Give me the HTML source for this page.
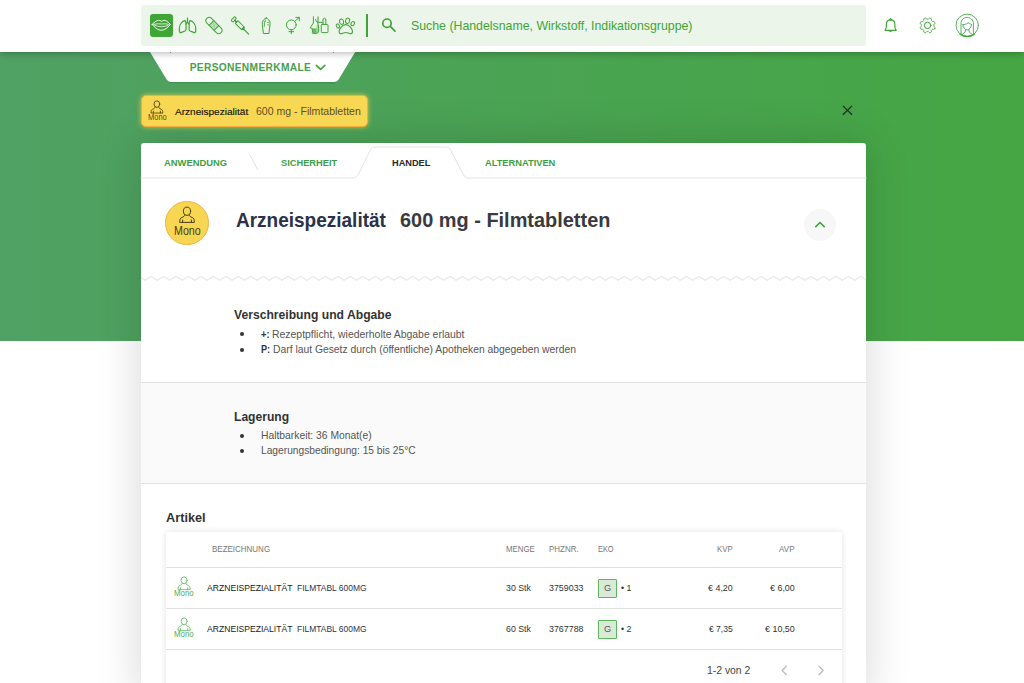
<!DOCTYPE html>
<html lang="de">
<head>
<meta charset="utf-8">
<title>Arzneispezialität 600 mg - Filmtabletten</title>
<style>
*{box-sizing:border-box;margin:0;padding:0}
html,body{width:1024px;height:683px;overflow:hidden;background:#fff;font-family:"Liberation Sans",sans-serif;color:#333}
.abs{position:absolute}
.t{position:absolute;white-space:nowrap;line-height:1;transform-origin:0 50%;z-index:10}
svg{position:absolute;overflow:visible}
#green{left:0;top:52px;width:1024px;height:289px;background:linear-gradient(to right,#50a164,#45a643)}
#hdr{left:0;top:0;width:1024px;height:52px;background:#fff;box-shadow:0 1px 7px rgba(0,0,0,.3);z-index:5}
#search{left:141px;top:5px;width:725px;height:41px;background:#ebf5ea;border-radius:3px}
#lips{left:150px;top:14px;width:23px;height:23px;background:#3fa535;border-radius:3px}
#sep{left:366px;top:14px;width:2px;height:23px;background:#3fa535}
#chip{left:141px;top:95px;width:227px;height:32px;background:#f8d852;border:1px solid #f3ab3c;border-radius:5px;box-shadow:0 0 5px rgba(250,205,70,.8);z-index:3}
#card{left:141px;top:143px;width:725px;height:560px;background:#fff;border-radius:3px 3px 0 0;box-shadow:0 0 45px rgba(0,0,0,.16);z-index:2}
#sec2{left:141px;top:382px;width:725px;height:102px;background:#fafafa;border-top:1px solid #e2e2e2;border-bottom:1px solid #e2e2e2;z-index:3}
#tbl{left:166px;top:531.5px;width:675.5px;height:180px;background:#fff;box-shadow:0 0 6px rgba(0,0,0,.12);border-radius:2px;z-index:3}
.hl{position:absolute;left:166px;width:676px;height:1px;background:#e0e0e0;z-index:4}
.g{position:absolute;width:19.3px;height:19.1px;background:#d9ead6;border:1px solid #5cb85c;border-radius:1px;z-index:4}
.bu{position:absolute;width:4px;height:4px;border-radius:50%;background:#333;z-index:4}
</style>
</head>
<body>
<div id="green" class="abs"></div>
<div id="hdr" class="abs">
  <div id="search" class="abs"></div>
  <div id="lips" class="abs"></div>
  <div id="sep" class="abs"></div>
</div>
<svg style="left:149.5px;top:52px;z-index:4" width="206" height="32" viewBox="0 0 206 32"><path d="M19.5 30.6H185.5" stroke="#2f8a3a" stroke-opacity=".55" stroke-width="1.2" fill="none"/><path d="M0 0H205.2L188.6 27.6Q187.2 30 184.4 30H20.8Q18 30 16.6 27.6Z" fill="#fff"/></svg>
<div class="abs" style="left:170.2px;top:51.6px;width:1.2px;height:.9px;background:rgba(70,70,100,.55);z-index:7"></div>
<div class="abs" style="left:333px;top:51.6px;width:1.2px;height:.9px;background:rgba(70,70,100,.55);z-index:7"></div>
<div id="chip" class="abs"></div>
<div id="card" class="abs"></div>
<div id="sec2" class="abs"></div>
<div id="tbl" class="abs"></div>
<div class="hl" style="top:567px"></div>
<div class="hl" style="top:608px"></div>
<div class="hl" style="top:649px"></div>
<div class="g" style="left:597.6px;top:578.9px"></div>
<div class="g" style="left:597.6px;top:619.9px"></div>
<div class="bu" style="left:240px;top:332.2px"></div>
<div class="bu" style="left:240px;top:347.7px"></div>
<div class="bu" style="left:240px;top:433.5px"></div>
<div class="bu" style="left:240px;top:449.1px"></div>
<div class="abs" style="left:165px;top:201px;width:43.5px;height:43.5px;border-radius:50%;background:#f7d651;border:1px solid #f0b24a;z-index:4"></div>
<div class="abs" style="left:804px;top:209px;width:32px;height:32px;border-radius:50%;background:#f7f7f7;z-index:4"></div>

<svg style="left:0;top:0;z-index:8" width="1024" height="683" viewBox="0 0 1024 683" fill="none" stroke-linecap="round" stroke-linejoin="round">
<defs>
<clipPath id="cc"><rect x="141" y="270" width="725" height="20"/></clipPath>
</defs>
<!-- lips -->
<g stroke="#fff" stroke-width=".95">
<path d="M152.2 24.4C155 21.5 157 20.3 158.6 20.3C159.8 20.3 160.6 21.3 161.3 21.3C162 21.3 162.8 20.3 164 20.3C165.6 20.3 167.6 21.5 170.4 24.4C167.5 28 164.5 30.2 161.3 30.2C158 30.2 155 28 152.2 24.4Z"/>
<path d="M153.4 24.4Q157.5 23.3 161.3 24Q165 23.3 169.2 24.4M154.4 25.2Q161.3 28.4 168.2 25.2" stroke-width=".75"/>
</g>
<g stroke="#3fa535" stroke-width="1">
<!-- lungs -->
<g stroke-width="1.2"><path d="M187.5 18.2V22.6M187.5 22.4L185.9 24M187.5 22.4L189.2 24"/>
<path d="M184.6 20.6C182 21.3 179.5 24.5 179.4 28V31C179.4 32.4 180.4 32.8 181.5 32.4L185 31C185.7 30.7 186 30.2 186 29.4V23.8C186 22 185.6 20.4 184.6 20.6Z"/>
<path d="M190.5 20.6C193.1 21.3 195.6 24.5 195.7 28V31C195.7 32.4 194.7 32.8 193.6 32.4L190.1 31C189.4 30.7 189.1 30.2 189.1 29.4V23.8C189.1 22 189.5 20.4 190.5 20.6Z"/></g>
<!-- bandage -->
<g transform="translate(213.95 25.5) rotate(45)"><rect x="-10" y="-3.3" width="20" height="6.6" rx="3.3"/><rect x="-3.5" y="-3.3" width="7" height="6.6" fill="#3fa535" fill-opacity=".22" stroke="none"/><path d="M-3.5 -3.3V3.3M3.5 -3.3V3.3"/><g fill="#3fa535" stroke="none" fill-opacity=".55"><circle cx="-1.7" cy="-1.3" r=".45"/><circle cx="0" cy="-1.3" r=".45"/><circle cx="1.7" cy="-1.3" r=".45"/><circle cx="-1.7" cy="1.3" r=".45"/><circle cx="0" cy="1.3" r=".45"/><circle cx="1.7" cy="1.3" r=".45"/><circle cx="-.85" cy="0" r=".45"/><circle cx=".85" cy="0" r=".45"/></g></g>
<!-- syringe -->
<g transform="translate(239.7 25.2) rotate(45)"><rect x="-4.4" y="-1.9" width="8.8" height="3.8" rx=".3"/><path d="M4.4 -1.7L6.4 0L4.4 1.7Z" fill="#3fa535"/><path d="M6 0H12.6" stroke-width="1.2"/><path d="M-4.4 0H-7" stroke-width="1.6"/><rect x="-9.7" y="-2.7" width="2.7" height="5.4" rx="1.2"/></g>
<!-- tube -->
<path d="M266.2 17.9C268 18.8 270 20.6 270 22.6V24.4L268.9 33.5H263.4L262.3 24.4V22.6C262.3 20.6 264.4 18.8 266.2 17.9Z"/><path d="M264.4 21.2V26.4M265.6 20V21.2M267.6 22.4H268.8M267.6 24.8H268.8" stroke-width=".8"/>
<!-- gender -->
<circle cx="291.3" cy="24.9" r="4.9"/><path d="M294.8 21.4L299.2 17.4M295.8 17.4H299.3V20.7M291.3 29.8V33.7M288.9 31.7H293.7"/>
<!-- hand + polish -->
<path d="M313.4 16.8V23L310.2 27.8L312.4 28.5V32.6Q312.4 33.6 313.6 33.6H316.2Q318.7 33.2 318.7 30V28L317.7 22.4M318 16.8V22.2M315.5 19.5Q316 22.2 318 22.3H322.8"/>
<rect x="312.6" y="28.4" width="3.9" height="5" fill="#3fa535" fill-opacity=".75" stroke="none"/><rect x="316.5" y="25" width="2" height="8" fill="#3fa535" fill-opacity=".4" stroke="none"/>
<rect x="321.3" y="24.4" width="6.7" height="8.2" rx=".8"/><path d="M323 24.4V20Q323 18.2 324.4 18.2Q325.8 18.2 325.8 20V24.4"/>
<!-- paw -->
<path d="M345.8 24.6C342.4 24.6 339.1 29.3 339.1 31.6C339.1 33.5 340.6 33.9 342.1 33.5C343.6 33.1 344.5 32.5 345.8 32.5C347.1 32.5 348 33.1 349.5 33.5C351 33.9 352.5 33.5 352.5 31.6C352.5 29.3 349.2 24.6 345.8 24.6Z" stroke-width="1.15"/>
<ellipse cx="337.9" cy="25.9" rx="1.5" ry="2.1" transform="rotate(-30 337.9 25.9)"/><ellipse cx="341.6" cy="21.7" rx="2" ry="2.7" transform="rotate(-12 341.6 21.7)"/><ellipse cx="347.6" cy="20.8" rx="2" ry="2.7" transform="rotate(8 347.6 20.8)"/><ellipse cx="352.7" cy="23.6" rx="1.6" ry="2.2" transform="rotate(30 352.7 23.6)"/>
</g>
<!-- magnifier -->
<g stroke="#3fa535" stroke-width="1.7"><circle cx="387" cy="23.2" r="4.2"/><path d="M390.3 26.4L395 31.1"/></g>
<!-- bell -->
<g stroke="#3fa535" stroke-width="1.15"><path d="M885 30.4H896.2L894.9 27.6V24.5C894.9 21.6 893 19.9 890.6 19.9C888.2 19.9 886.3 21.6 886.3 24.5V27.6Z"/><path d="M889.5 30.6Q890.6 32.8 891.7 30.6"/><path d="M890.6 18.4L889.9 19.8H891.3Z" fill="#3fa535"/></g>
<!-- gear -->
<g stroke="#3fa535" stroke-width="1"><path d="M934.71 28.35 L934.59 28.62 L934.46 28.90 L934.28 29.14 L933.84 29.23 L933.38 29.26 L932.92 29.27 L932.50 29.27 L932.31 29.43 L932.15 29.61 L931.98 29.78 L931.81 29.95 L931.63 30.11 L931.47 30.30 L931.47 30.72 L931.46 31.18 L931.43 31.64 L931.34 32.08 L931.10 32.26 L930.82 32.39 L930.55 32.51 L930.27 32.62 L929.98 32.72 L929.68 32.77 L929.31 32.52 L928.96 32.22 L928.63 31.90 L928.33 31.60 L928.09 31.58 L927.84 31.60 L927.60 31.60 L927.36 31.60 L927.11 31.58 L926.87 31.60 L926.57 31.90 L926.24 32.22 L925.89 32.52 L925.52 32.77 L925.22 32.72 L924.93 32.62 L924.65 32.51 L924.38 32.39 L924.10 32.26 L923.86 32.08 L923.77 31.64 L923.74 31.18 L923.73 30.72 L923.73 30.30 L923.57 30.11 L923.39 29.95 L923.22 29.78 L923.05 29.61 L922.89 29.43 L922.70 29.27 L922.28 29.27 L921.82 29.26 L921.36 29.23 L920.92 29.14 L920.74 28.90 L920.61 28.62 L920.49 28.35 L920.38 28.07 L920.28 27.78 L920.23 27.48 L920.48 27.11 L920.78 26.76 L921.10 26.43 L921.40 26.13 L921.42 25.89 L921.40 25.64 L921.40 25.40 L921.40 25.16 L921.42 24.91 L921.40 24.67 L921.10 24.37 L920.78 24.04 L920.48 23.69 L920.23 23.32 L920.28 23.02 L920.38 22.73 L920.49 22.45 L920.61 22.18 L920.74 21.90 L920.92 21.66 L921.36 21.57 L921.82 21.54 L922.28 21.53 L922.70 21.53 L922.89 21.37 L923.05 21.19 L923.22 21.02 L923.39 20.85 L923.57 20.69 L923.73 20.50 L923.73 20.08 L923.74 19.62 L923.77 19.16 L923.86 18.72 L924.10 18.54 L924.38 18.41 L924.65 18.29 L924.93 18.18 L925.22 18.08 L925.52 18.03 L925.89 18.28 L926.24 18.58 L926.57 18.90 L926.87 19.20 L927.11 19.22 L927.36 19.20 L927.60 19.20 L927.84 19.20 L928.09 19.22 L928.33 19.20 L928.63 18.90 L928.96 18.58 L929.31 18.28 L929.68 18.03 L929.98 18.08 L930.27 18.18 L930.55 18.29 L930.82 18.41 L931.10 18.54 L931.34 18.72 L931.43 19.16 L931.46 19.62 L931.47 20.08 L931.47 20.50 L931.63 20.69 L931.81 20.85 L931.98 21.02 L932.15 21.19 L932.31 21.37 L932.50 21.53 L932.92 21.53 L933.38 21.54 L933.84 21.57 L934.28 21.66 L934.46 21.90 L934.59 22.18 L934.71 22.45 L934.82 22.73 L934.92 23.02 L934.97 23.32 L934.72 23.69 L934.42 24.04 L934.10 24.37 L933.80 24.67 L933.78 24.91 L933.80 25.16 L933.80 25.40 L933.80 25.64 L933.78 25.89 L933.80 26.13 L934.10 26.43 L934.42 26.76 L934.72 27.11 L934.97 27.48 L934.92 27.78 L934.82 28.07 L934.71 28.35Z"/><circle cx="927.6" cy="25.4" r="3.2"/></g>
<!-- avatar -->
<g stroke="#58b25c" stroke-width="1"><circle cx="967.2" cy="25.3" r="11.2"/>
<path d="M961 33.3V24C961 19.6 963.6 17.5 967.2 17.5C970.8 17.5 973.4 19.6 973.4 24V33.3"/>
<path d="M962.8 24.6C962.8 27 965 29.9 967.2 30C969.4 29.9 971.6 27 971.6 24.6M962.8 24.7Q965 24.6 966.6 23.8Q968 22.5 969.4 23Q970.4 24.5 971.6 24.7M965.7 29.5L965 32.3L962.4 34.2M968.7 29.5L969.4 32.3L972 34.2"/>
<path d="M960.2 34.1A11.2 11.2 0 0 0 974.2 34.1" stroke="#3fa535" stroke-width="1.5"/></g>
<!-- PM chevron -->
<path d="M316.3 65.3L320.6 69.3L324.9 65.3" stroke="#3fa535" stroke-width="1.6"/>
<!-- close X -->
<path d="M842.9 105.9L852 114.7M852 105.9L842.9 114.7" stroke="#2a2a2a" stroke-width="1.3" stroke-linecap="butt"/>
<!-- tabs line -->
<path d="M141 178H352C355.5 178 357 176.8 358.5 174.2L370 150.5C371.5 147.6 373 147 376 147H445C448 147 449.5 147.6 451 150.5L463 174.2C464.5 176.8 466 178 469.5 178H866" stroke="#e4e4e4" stroke-width="1"/>
<path d="M249.3 153.8L257.6 169.5" stroke="#e4e4e4" stroke-width="1"/>
<!-- zigzag -->
<path d="M132.43 280.10 L138.65 276.50 L144.88 280.10 L151.10 276.50 L157.32 280.10 L163.55 276.50 L169.77 280.10 L176.00 276.50 L182.22 280.10 L188.45 276.50 L194.67 280.10 L200.90 276.50 L207.12 280.10 L213.35 276.50 L219.57 280.10 L225.80 276.50 L232.02 280.10 L238.25 276.50 L244.47 280.10 L250.70 276.50 L256.92 280.10 L263.15 276.50 L269.37 280.10 L275.60 276.50 L281.82 280.10 L288.05 276.50 L294.28 280.10 L300.50 276.50 L306.73 280.10 L312.95 276.50 L319.18 280.10 L325.40 276.50 L331.63 280.10 L337.85 276.50 L344.08 280.10 L350.30 276.50 L356.53 280.10 L362.75 276.50 L368.98 280.10 L375.20 276.50 L381.43 280.10 L387.65 276.50 L393.88 280.10 L400.10 276.50 L406.33 280.10 L412.55 276.50 L418.78 280.10 L425.00 276.50 L431.23 280.10 L437.45 276.50 L443.68 280.10 L449.90 276.50 L456.13 280.10 L462.35 276.50 L468.58 280.10 L474.80 276.50 L481.03 280.10 L487.25 276.50 L493.48 280.10 L499.70 276.50 L505.93 280.10 L512.15 276.50 L518.38 280.10 L524.60 276.50 L530.83 280.10 L537.05 276.50 L543.28 280.10 L549.50 276.50 L555.73 280.10 L561.95 276.50 L568.18 280.10 L574.40 276.50 L580.63 280.10 L586.85 276.50 L593.08 280.10 L599.30 276.50 L605.53 280.10 L611.75 276.50 L617.98 280.10 L624.20 276.50 L630.43 280.10 L636.65 276.50 L642.88 280.10 L649.10 276.50 L655.33 280.10 L661.55 276.50 L667.78 280.10 L674.00 276.50 L680.23 280.10 L686.45 276.50 L692.68 280.10 L698.90 276.50 L705.13 280.10 L711.35 276.50 L717.58 280.10 L723.80 276.50 L730.03 280.10 L736.25 276.50 L742.48 280.10 L748.70 276.50 L754.93 280.10 L761.15 276.50 L767.38 280.10 L773.60 276.50 L779.83 280.10 L786.05 276.50 L792.28 280.10 L798.50 276.50 L804.73 280.10 L810.95 276.50 L817.18 280.10 L823.40 276.50 L829.63 280.10 L835.85 276.50 L842.08 280.10 L848.30 276.50 L854.53 280.10 L860.75 276.50 L866.98 280.10" stroke="#ebebeb" stroke-width="1.4" stroke-linejoin="miter" clip-path="url(#cc)"/>
<!-- title person -->
<g stroke="#4a3f1c" stroke-width="1"><ellipse cx="187" cy="211.2" rx="3.6" ry="4.1"/><path d="M184.9 214.7C184.7 216.3 183.5 216.9 181.8 217.5C180 218.2 179.7 219.3 179.7 222.4H194.3C194.3 219.3 194 218.2 192.2 217.5C190.5 216.9 189.3 216.3 189.1 214.7M182.6 220V222.4M191.4 220V222.4"/></g>
<!-- chip person -->
<g stroke="#5a4a1c" stroke-width="1.15" transform="translate(156.9 104.1) scale(.8) translate(-187 -211.2)"><ellipse cx="187" cy="211.2" rx="3.6" ry="4.1"/><path d="M184.9 214.7C184.7 216.3 183.5 216.9 181.8 217.5C180 218.2 179.7 219.3 179.7 222.4H194.3C194.3 219.3 194 218.2 192.2 217.5C190.5 216.9 189.3 216.3 189.1 214.7M182.6 220V222.4M191.4 220V222.4"/></g>
<!-- row persons -->
<g stroke="#74c078" stroke-width="1.15" transform="translate(184.1 580.3) scale(.835) translate(-187 -211.2)"><ellipse cx="187" cy="211.2" rx="3.6" ry="4.1"/><path d="M184.9 214.7C184.7 216.3 183.5 216.9 181.8 217.5C180 218.2 179.7 219.3 179.7 222.4H194.3C194.3 219.3 194 218.2 192.2 217.5C190.5 216.9 189.3 216.3 189.1 214.7M182.6 220V222.4M191.4 220V222.4"/></g>
<g stroke="#74c078" stroke-width="1.15" transform="translate(184.1 621.3) scale(.835) translate(-187 -211.2)"><ellipse cx="187" cy="211.2" rx="3.6" ry="4.1"/><path d="M184.9 214.7C184.7 216.3 183.5 216.9 181.8 217.5C180 218.2 179.7 219.3 179.7 222.4H194.3C194.3 219.3 194 218.2 192.2 217.5C190.5 216.9 189.3 216.3 189.1 214.7M182.6 220V222.4M191.4 220V222.4"/></g>
<!-- up chevron -->
<path d="M815.8 226.6L820 222.5L824.2 226.6" stroke="#3fa535" stroke-width="1.6"/>
<!-- pager -->
<path d="M786.4 666.2L782.2 670.5L786.4 674.8M819 666.2L823.2 670.5L819 674.8" stroke="#bdbdbd" stroke-width="1.3"/>
</svg>

<div class="t" style="left:411.00px;top:20px;font-size:12.4px;color:#3fa535;transform:scaleX(0.9952);">Suche (Handelsname, Wirkstoff, Indikationsgruppe)</div>
<div class="t" style="left:189.70px;top:63px;font-size:10.2px;color:#4aa04e;font-weight:bold;letter-spacing:0.337px;">PERSONENMERKMALE</div>
<div class="t" style="left:175.20px;top:107px;font-size:9.9px;color:#15130c;transform:scaleX(1.0180);"><span style="-webkit-text-stroke:.15px #15130c">Arzneispezialität</span></div>
<div class="t" style="left:255.60px;top:107px;font-size:10.4px;color:#5e5025;transform:scaleX(1.0138);">600 mg - Filmtabletten</div>
<div class="t" style="left:163.80px;top:158px;font-size:9.9px;color:#3f9e45;font-weight:bold;transform:scaleX(0.9489);">ANWENDUNG</div>
<div class="t" style="left:281.00px;top:158px;font-size:9.9px;color:#3f9e45;font-weight:bold;transform:scaleX(0.9396);">SICHERHEIT</div>
<div class="t" style="left:391.90px;top:158px;font-size:9.9px;color:#2a2a2a;font-weight:bold;transform:scaleX(0.9330);">HANDEL</div>
<div class="t" style="left:485.30px;top:158px;font-size:9.9px;color:#3f9e45;font-weight:bold;transform:scaleX(0.9399);">ALTERNATIVEN</div>
<div class="t" style="left:174.30px;top:225px;font-size:12.2px;color:#4a3f1c;transform:scaleX(0.8754);">Mono</div>
<div class="t" style="left:236.40px;top:210px;font-size:20.8px;color:#2b3147;font-weight:bold;transform:scaleX(0.9133);">Arzneispezialität</div>
<div class="t" style="left:399.60px;top:210px;font-size:20.8px;color:#3a3a3e;font-weight:bold;transform:scaleX(0.9582);">600 mg - Filmtabletten</div>
<div class="t" style="left:233.90px;top:308px;font-size:13.6px;color:#333;font-weight:bold;transform:scaleX(0.8936);">Verschreibung und Abgabe</div>
<div class="t" style="left:260.70px;top:330px;font-size:10.1px;color:#333;font-weight:bold;transform:scaleX(0.9174);">+:</div>
<div class="t" style="left:272.00px;top:330px;font-size:10.1px;color:#555;transform:scaleX(1.0333);">Rezeptpflicht, wiederholte Abgabe erlaubt</div>
<div class="t" style="left:260.70px;top:345px;font-size:10.1px;color:#333;font-weight:bold;transform:scaleX(0.9015);">P:</div>
<div class="t" style="left:272.80px;top:345px;font-size:10.1px;color:#555;transform:scaleX(1.0233);">Darf laut Gesetz durch (öffentliche) Apotheken abgegeben werden</div>
<div class="t" style="left:233.90px;top:410px;font-size:13.6px;color:#333;font-weight:bold;transform:scaleX(0.8896);">Lagerung</div>
<div class="t" style="left:260.80px;top:431px;font-size:10.1px;color:#555;transform:scaleX(1.0223);">Haltbarkeit: 36 Monat(e)</div>
<div class="t" style="left:260.80px;top:446px;font-size:10.1px;color:#555;transform:scaleX(1.0120);">Lagerungsbedingung: 15 bis 25°C</div>
<div class="t" style="left:165.80px;top:511px;font-size:13.6px;color:#333;font-weight:bold;transform:scaleX(0.9359);">Artikel</div>
<div class="t" style="left:212.10px;top:545px;font-size:9.3px;color:#777;transform:scaleX(0.8586);">BEZEICHNUNG</div>
<div class="t" style="left:505.80px;top:545px;font-size:9.3px;color:#777;transform:scaleX(0.8418);">MENGE</div>
<div class="t" style="left:549.40px;top:545px;font-size:9.3px;color:#777;transform:scaleX(0.8553);">PHZNR.</div>
<div class="t" style="left:598.20px;top:545px;font-size:9.3px;color:#777;transform:scaleX(0.7943);">EKO</div>
<div class="t" style="left:717.40px;top:545px;font-size:9.3px;color:#777;transform:scaleX(0.8437);">KVP</div>
<div class="t" style="left:779.30px;top:545px;font-size:9.3px;color:#777;transform:scaleX(0.8649);">AVP</div>
<div class="t" style="left:207.00px;top:584px;font-size:8.6px;color:#222;">ARZNEISPEZIALITÄT</div>
<div class="t" style="left:297.20px;top:583px;font-size:9.8px;color:#2b3550;transform:scaleX(0.8625);">FILMTABL 600MG</div>
<div class="t" style="left:505.80px;top:583px;font-size:9.6px;color:#333;transform:scaleX(0.9153);">30 Stk</div>
<div class="t" style="left:548.80px;top:583px;font-size:9.6px;color:#333;transform:scaleX(0.9235);">3759033</div>
<div class="t" style="left:603.50px;top:583px;font-size:9.9px;color:#555;transform:scaleX(0.9366);">G</div>
<div class="t" style="left:621.30px;top:583px;font-size:9.6px;color:#333;transform:scaleX(0.9143);">•&nbsp;1</div>
<div class="t" style="left:708.30px;top:583px;font-size:9.6px;color:#333;transform:scaleX(0.9293);">€ 4,20</div>
<div class="t" style="left:770.00px;top:583px;font-size:9.6px;color:#333;transform:scaleX(0.9293);">€ 6,00</div>
<div class="t" style="left:207.00px;top:625px;font-size:8.6px;color:#222;">ARZNEISPEZIALITÄT</div>
<div class="t" style="left:297.20px;top:624px;font-size:9.8px;color:#2b3550;transform:scaleX(0.8625);">FILMTABL 600MG</div>
<div class="t" style="left:505.80px;top:624px;font-size:9.6px;color:#333;transform:scaleX(0.9153);">60 Stk</div>
<div class="t" style="left:548.80px;top:624px;font-size:9.6px;color:#333;transform:scaleX(0.9235);">3767788</div>
<div class="t" style="left:603.50px;top:624px;font-size:9.9px;color:#555;transform:scaleX(0.9366);">G</div>
<div class="t" style="left:621.30px;top:624px;font-size:9.6px;color:#333;transform:scaleX(0.9143);">•&nbsp;2</div>
<div class="t" style="left:709.40px;top:624px;font-size:9.6px;color:#333;transform:scaleX(0.8881);">€ 7,35</div>
<div class="t" style="left:765.00px;top:624px;font-size:9.6px;color:#333;transform:scaleX(0.9308);">€ 10,50</div>
<div class="t" style="left:147.70px;top:113px;font-size:8.5px;color:#5a4a1c;transform:scaleX(0.8794);">Mono</div>
<div class="t" style="left:174.40px;top:589px;font-size:8.8px;color:#55ae59;transform:scaleX(0.8948);">Mono</div>
<div class="t" style="left:174.40px;top:630px;font-size:8.8px;color:#55ae59;transform:scaleX(0.8948);">Mono</div>
<div class="t" style="left:706.50px;top:665px;font-size:10.8px;color:#444;transform:scaleX(0.9616);">1-2 von 2</div>
</body>
</html>
